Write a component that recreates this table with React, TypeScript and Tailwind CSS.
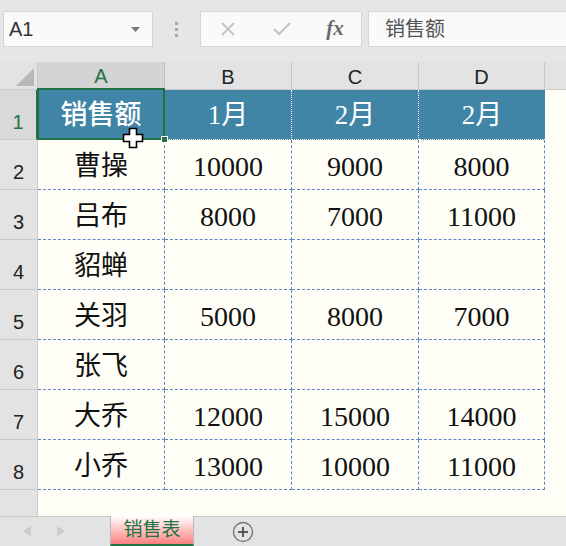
import React from "react";

const cellFont = { fontFamily: '"Liberation Serif", "Noto Sans CJK SC", serif' };
const uiFont = { fontFamily: '"Liberation Sans", "Noto Sans CJK SC", sans-serif' };

const cols = ["A", "B", "C", "D"];
const header = ["销售额", "1月", "2月", "2月"];
const rows = [
  ["曹操", "10000", "9000", "8000"],
  ["吕布", "8000", "7000", "11000"],
  ["貂蝉", "", "", ""],
  ["关羽", "5000", "8000", "7000"],
  ["张飞", "", "", ""],
  ["大乔", "12000", "15000", "14000"],
  ["小乔", "13000", "10000", "11000"],
];

function CursorCross() {
  return (
    <svg width="22" height="22" viewBox="0 0 22 22" className="absolute left-[84px] top-[37px] z-20">
      <path
        d="M7.5 1.5h7v6h6v7h-6v6h-7v-6h-6v-7h6z"
        fill="#fff"
        stroke="#000"
        strokeWidth="1.6"
        strokeLinejoin="miter"
      />
    </svg>
  );
}

export default function App() {
  return (
    <div className="w-[566px] h-[546px] overflow-hidden bg-[#e6e6e6] flex flex-col" style={uiFont}>
      {/* formula bar */}
      <div className="h-[62px] flex items-start pt-[11px] shrink-0">
        <div className="ml-[3px] w-[150px] h-[36px] bg-[#fafafa] border border-[#d6d6d6] flex items-center justify-between pl-[5px] pr-[12px]">
          <span className="text-[20px] text-[#333]">A1</span>
          <svg width="9" height="5" viewBox="0 0 9 5">
            <path d="M0 0h9L4.5 5z" fill="#777" />
          </svg>
        </div>
        <div className="w-[47px] h-[36px] flex flex-col items-center justify-center gap-[3px]">
          <span className="w-[3px] h-[3px] bg-[#a8a8a8]" />
          <span className="w-[3px] h-[3px] bg-[#a8a8a8]" />
          <span className="w-[3px] h-[3px] bg-[#a8a8a8]" />
        </div>
        <div className="w-[162px] h-[36px] bg-[#fafafa] border border-[#d6d6d6] flex items-center">
          <div className="w-[54px] flex justify-center">
            <svg width="16" height="16" viewBox="0 0 16 16">
              <path d="M2 2l12 12M14 2L2 14" stroke="#c4c4c4" strokeWidth="1.8" />
            </svg>
          </div>
          <div className="w-[54px] flex justify-center">
            <svg width="18" height="14" viewBox="0 0 18 14">
              <path d="M1 7l5 5L17 1" stroke="#c4c4c4" strokeWidth="2.2" fill="none" />
            </svg>
          </div>
          <div className="w-[52px] flex justify-center">
            <span className="text-[21px] italic font-bold text-[#6a6a6a]" style={{ fontFamily: '"Liberation Serif", serif' }}>
              fx
            </span>
          </div>
        </div>
        <div className="ml-[6px] flex-1 h-[36px] bg-[#fafafa] border border-[#d6d6d6] border-r-0 flex items-center pl-[16px]">
          <span className="text-[20px] text-[#555]">销售额</span>
        </div>
      </div>

      {/* sheet grid */}
      <div className="grid grid-cols-[38px_127px_127px_127px_126px_1fr] grid-rows-[28px_repeat(8,50px)_26px] bg-[#fefef6] shrink-0">
        {/* column headers */}
        <div className="bg-[#e3e3e3] border-r border-b border-[#c9c9c9] flex items-end justify-end p-[3px]">
          <svg width="18" height="18" viewBox="0 0 18 18">
            <path d="M18 0v18H0z" fill="#b8b8b8" />
          </svg>
        </div>
        {cols.map((c, i) => (
          <div
            key={c}
            className={
              i === 0
                ? "bg-[#d4d4d4] border-r border-b-2 border-[#c0c0c0] border-b-[#217346] flex items-center justify-center pt-[2px] text-[20px] text-[#217346]"
                : "bg-[#e3e3e3] border-r border-b border-[#c9c9c9] flex items-center justify-center pt-[2px] text-[20px] text-[#222]"
            }
          >
            {c}
          </div>
        ))}
        <div className="bg-[#e3e3e3] border-b border-[#c9c9c9]" />

        {/* row 1 */}
        <div className="bg-[#d9d9d9] border-r-2 border-r-[#217346] border-b border-b-[#c9c9c9] flex items-end justify-center pb-[2px] text-[20px] text-[#217346]">
          1
        </div>
        {header.map((h, i) => (
          <div
            key={i}
            className={
              "relative bg-[#4084a6] border-b border-dotted border-b-white flex items-center justify-center pt-[2px] text-[27px] text-white " +
              (i < 3 ? "border-r border-r-white" : "")
            }
            style={cellFont}
          >
            <span className={i === 0 ? "font-medium" : ""}>{h}</span>
            {i === 0 && (
              <>
                <div className="absolute -left-px -top-[2px] -right-px -bottom-px border-2 border-[#217346] pointer-events-none z-10" />
                <div className="absolute -right-[4px] -bottom-[4px] w-[7px] h-[7px] bg-[#217346] border border-white z-20" />
                <CursorCross />
              </>
            )}
          </div>
        ))}
        <div className="bg-[#fefef6]" />

        {/* data rows */}
        {rows.map((r, ri) => (
          <React.Fragment key={ri}>
            <div className="bg-[#e3e3e3] border-r border-b border-[#c9c9c9] flex items-end justify-center pb-[2px] text-[20px] text-[#222]">
              {ri + 2}
            </div>
            {r.map((v, ci) => (
              <div
                key={ci}
                className={
                  "border-r border-b border-dashed border-[#5b87c5] flex items-center justify-center pt-[4px] text-[#111] " +
                  (ci === 0 ? "text-[27px]" : "text-[28px]")
                }
                style={cellFont}
              >
                {v}
              </div>
            ))}
            <div className="bg-[#fefef6]" />
          </React.Fragment>
        ))}

        {/* filler row */}
        <div className="bg-[#e3e3e3] border-r border-[#c9c9c9]" />
        <div className="col-span-5 bg-[#fefef6]" />
      </div>

      {/* sheet tabs */}
      <div className="flex-1 bg-[#e3e3e3] border-t border-[#c6c6c6] flex items-start">
        <div className="w-[110px] h-full flex items-center">
          <span className="ml-[22px] text-[10px] text-[#cacaca]">◀</span>
          <span className="ml-[24px] text-[10px] text-[#cacaca]">▶</span>
        </div>
        <div className="-mt-px w-[84px] h-[30px] bg-gradient-to-b from-white to-[#f77f7f] border-x border-[#b8b8b8] border-b-2 border-b-[#217346] flex items-center justify-center">
          <span className="text-[19px] text-[#217346]">销售表</span>
        </div>
        <div className="ml-[38px] h-full flex items-center">
          <svg width="22" height="22" viewBox="0 0 22 22">
            <circle cx="11" cy="11" r="9.5" fill="none" stroke="#7a7a7a" strokeWidth="1.4" />
            <path d="M11 6v10M6 11h10" stroke="#5a5a5a" strokeWidth="2" />
          </svg>
        </div>
      </div>
    </div>
  );
}
